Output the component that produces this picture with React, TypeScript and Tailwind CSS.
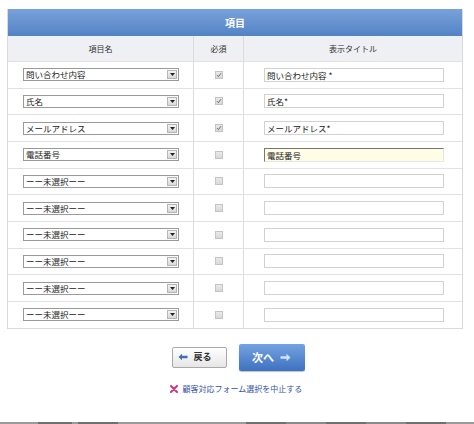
const rows = [
  { item: "問い合わせ内容", req: true, title: "問い合わせ内容 *" },
  { item: "氏名", req: true, title: "氏名*" },
  { item: "メールアドレス", req: true, title: "メールアドレス*" },
  { item: "電話番号", req: false, title: "電話番号", focus: true },
  { item: "ーー未選択ーー", req: false, title: "" },
  { item: "ーー未選択ーー", req: false, title: "" },
  { item: "ーー未選択ーー", req: false, title: "" },
  { item: "ーー未選択ーー", req: false, title: "" },
  { item: "ーー未選択ーー", req: false, title: "" },
  { item: "ーー未選択ーー", req: false, title: "" },
];

function FakeSelect({ label }: { label: string }) {
  return (
    <div className="flex h-[13px] w-[156px] items-center border border-[#9a9a9a] bg-white pl-[2px] pr-[1px]">
      <span className="flex-1 whitespace-nowrap text-[8.5px] leading-[11px] text-[#222]">{label}</span>
      <span className="flex h-[9px] w-[10px] items-center justify-center border border-[#b5b5b5] bg-gradient-to-b from-[#f4f4f4] to-[#d8d8d8]">
        <svg width="5" height="3" viewBox="0 0 5 3">
          <path d="M0 0H5L2.5 3Z" fill="#222" />
        </svg>
      </span>
    </div>
  );
}

function Check({ on }: { on: boolean }) {
  return (
    <span className="flex h-[8px] w-[8px] items-center justify-center border border-[#c4c4c4] bg-gradient-to-b from-[#eaeaea] to-[#d8d8d8]">
      {on && (
        <svg width="6" height="6" viewBox="0 0 6 6">
          <path d="M1 3.2L2.4 4.6L5 1.2" stroke="#5a6a8a" strokeWidth="1" fill="none" />
        </svg>
      )}
    </span>
  );
}

export default function App() {
  return (
    <div
      className="relative h-[424px] w-[474px] overflow-hidden bg-white"
      style={{ fontFamily: '"Noto Sans CJK JP", "Noto Sans", sans-serif' }}
    >
      <div className="pl-[7px] pt-[9px]">
        <div className="w-[456px] border-x border-b border-[#d9d9d9]">
          {/* Title bar */}
          <div className="flex h-[27px] items-center justify-center bg-gradient-to-b from-[#7aa2da] to-[#5282c5] text-[10px] font-bold text-white">
            項目
          </div>

          {/* Column heads */}
          <div className="flex h-[25px] bg-[#eef0f4] text-[8px] text-[#333]">
            <div className="flex w-[186px] items-center justify-center border-r border-[#dcdcdc]">項目名</div>
            <div className="flex w-[50px] items-center justify-center border-r border-[#dcdcdc]">必須</div>
            <div className="flex flex-1 items-center justify-center">表示タイトル</div>
          </div>

          {rows.map((r, i) => (
            <div key={i} className="flex h-[26.67px] border-t border-[#e2e2e2] bg-white">
              <div className="flex w-[186px] items-center border-r border-[#dcdcdc] pl-[15px]">
                <FakeSelect label={r.item} />
              </div>
              <div className="flex w-[50px] items-center justify-center border-r border-[#dcdcdc]">
                <Check on={r.req} />
              </div>
              <div className="flex flex-1 items-center pl-[20px]">
                <div
                  className={
                    r.focus
                      ? "flex h-[14px] w-[180px] items-center whitespace-nowrap border border-t-[#777] border-l-[#777] border-r-[#e6e6e6] border-b-[#e6e6e6] bg-[#fffde6] pl-[2px] text-[8.5px] leading-[12px] text-[#222]"
                      : "flex h-[14px] w-[180px] items-center whitespace-nowrap border border-[#d2d2d2] bg-white pl-[2px] text-[8.5px] leading-[12px] text-[#222]"
                  }
                >
                  {r.title}
                </div>
              </div>
            </div>
          ))}
        </div>
      </div>

      {/* Buttons */}
      <div className="mt-[15px] flex items-center justify-center gap-[12px] pl-[2px]">
        <button className="flex h-[21px] w-[55px] items-center gap-[6px] rounded-[2px] border border-[#a9a9a9] bg-gradient-to-b from-[#ffffff] to-[#e6e6e6] pl-[5px] text-[9px] font-bold text-[#333]">
          <svg width="10" height="8" viewBox="0 0 10 8">
            <path d="M0.5 4L4 0.8V2.8H9.5V5.2H4V7.2Z" fill="#3f6fb8" />
          </svg>
          戻る
        </button>
        <button className="flex h-[27px] w-[66px] items-center justify-center gap-[6px] rounded-[2px] bg-gradient-to-b from-[#74a3e2] to-[#3e71c0] text-[11px] font-bold text-white shadow-[0_1px_1px_rgba(0,0,0,0.25)]">
          次へ
          <svg width="11" height="9" viewBox="0 0 11 9">
            <path d="M10.5 4.5L6.5 0.8V3.2H0.5V5.8H6.5V8.2Z" fill="#cfe3fb" />
          </svg>
        </button>
      </div>

      <div className="mt-[12px] flex items-center justify-center gap-[5px] pr-[2px]">
        <svg width="8" height="8" viewBox="0 0 8 8">
          <path d="M1 1L7 7M7 1L1 7" stroke="#d8317a" strokeWidth="2" strokeLinecap="round" />
        </svg>
        <span className="text-[8px] text-[#3552a8]">顧客対応フォーム選択を中止する</span>
      </div>

      {/* Bottom strip */}
      <div className="absolute bottom-0 left-0 flex h-[2px] w-full">
        <div className="w-[38px] bg-[#9a9a9a]" />
        <div className="w-[34px] bg-[#707070]" />
        <div className="w-[6px] bg-[#9a9a9a]" />
        <div className="w-[40px] bg-[#707070]" />
        <div className="w-[128px] bg-[#9a9a9a]" />
        <div className="w-[40px] bg-[#707070]" />
        <div className="w-[40px] bg-[#8a8a8a]" />
        <div className="w-[40px] bg-[#707070]" />
        <div className="w-[40px] bg-[#8a8a8a]" />
        <div className="w-[40px] bg-[#707070]" />
        <div className="flex-1 bg-[#9a9a9a]" />
      </div>
    </div>
  );
}
